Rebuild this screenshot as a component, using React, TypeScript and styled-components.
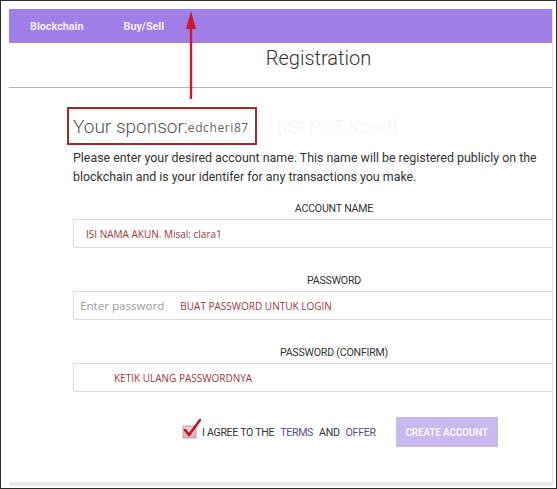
import React from "react";
import styled, { createGlobalStyle } from "styled-components";

const GlobalStyle = createGlobalStyle`
  body {
    margin: 0;
    background: #fff;
    font-family: Roboto, "Liberation Sans", sans-serif;
  }
`;

const Frame = styled.div`
  width: 557px;
  height: 489px;
  box-sizing: border-box;
  border: 1px solid #2b2b2b;
  padding: 8px 3px 0 8px;
  position: relative;
  overflow: hidden;
  display: flex;
  flex-direction: column;
  background: #fff;
`;

const Page = styled.div`
  flex: 1;
  display: flex;
  flex-direction: column;
  border-right: 1px solid #e2e2e2;
  border-bottom: 4px solid #e9e9e9;
  margin-bottom: 2px;
  overflow: hidden;
`;

const NavBar = styled.div`
  height: 34px;
  flex-shrink: 0;
  background: #a17fe9;
  display: flex;
  align-items: center;
  padding-left: 21px;
  gap: 40px;
`;

const NavLink = styled.span`
  color: #f6ecf8;
  font-family: Roboto, "Liberation Sans", sans-serif;
  font-weight: 700;
  font-size: 10.8px;
`;

const TitleBar = styled.div`
  height: 45px;
  flex-shrink: 0;
  box-sizing: border-box;
  border-bottom: 1px solid #b4b4b4;
  padding: 3px 0 0 76px;
  text-align: center;
  font-family: Roboto, sans-serif;
  font-weight: 300;
  font-size: 20px;
  line-height: 24px;
  color: #333;
`;

const Content = styled.div`
  padding-left: 64px;
  width: 522px;
`;

const SponsorRow = styled.div`
  margin-top: 19px;
  display: flex;
  align-items: center;
`;

const SponsorBox = styled.div`
  height: 38px;
  box-sizing: border-box;
  border: 2px solid #a6282d;
  margin-left: -6px;
  padding: 0 6px 0 4px;
  display: flex;
  align-items: center;
  white-space: nowrap;
`;

const SponsorLabel = styled.span`
  font-family: Roboto, sans-serif;
  font-weight: 300;
  font-size: 19px;
  color: #555;
`;

const SponsorName = styled.span`
  font-family: "Open Sans", sans-serif;
  font-size: 12px;
  letter-spacing: 0.6px;
  color: #666;
  padding-top: 3px;
`;

const Ghost = styled.span`
  margin-left: 20px;
  font-family: Roboto, sans-serif;
  font-weight: 300;
  font-size: 19px;
  color: #f6f6f6;
`;

const Description = styled.p`
  margin: 3px 0 0;
  font-family: Roboto, sans-serif;
  font-size: 12.4px;
  line-height: 19px;
  color: #333;
  padding-right: 46px;
`;

const Field = styled.div<{ $gap: number }>`
  margin-top: ${(p) => p.$gap}px;
  display: flex;
  flex-direction: column;
`;

const Label = styled.div`
  text-align: center;
  font-family: Roboto, sans-serif;
  font-size: 10.6px;
  letter-spacing: -0.2px;
  color: #333;
  line-height: 14px;
  margin-bottom: 3px;
`;

const InputBox = styled.div<{ $indent: number }>`
  height: 29px;
  box-sizing: border-box;
  border: 1px solid #dcdcdc;
  border-right: none;
  display: flex;
  align-items: center;
  padding-left: ${(p) => p.$indent}px;
  gap: 16px;
`;

const Placeholder = styled.span`
  font-family: "Open Sans", sans-serif;
  font-size: 11.6px;
  color: #9a9a9a;
`;

const Hint = styled.span`
  font-family: "Open Sans", sans-serif;
  font-size: 10px;
  color: #a3363a;
`;

const AgreeRow = styled.div`
  margin-top: 25px;
  padding-left: 109px;
  display: flex;
  align-items: center;
`;

const Check = styled.svg`
  width: 20px;
  height: 22px;
  margin-top: -6px;
`;

const AgreeText = styled.span<{ $link?: boolean }>`
  font-family: Roboto, sans-serif;
  font-size: 10.6px;
  letter-spacing: -0.3px;
  color: ${(p) => (p.$link ? "#5c4a8e" : "#333")};
  margin-right: 6px;
`;

const CreateButton = styled.div`
  margin-left: 14px;
  width: 102px;
  height: 30px;
  background: #c8b9ee;
  color: #f7f3ff;
  font-family: Roboto, sans-serif;
  font-weight: 700;
  font-size: 10px;
  letter-spacing: -0.2px;
  display: flex;
  align-items: center;
  justify-content: center;
`;

const Arrow = styled.svg`
  position: absolute;
  left: 181px;
  top: 8px;
  width: 20px;
  height: 92px;
`;

export default function App() {
  return (
    <>
      <GlobalStyle />
      <Frame>
        <Page>
          <NavBar>
            <NavLink>Blockchain</NavLink>
            <NavLink>Buy/Sell</NavLink>
          </NavBar>
          <TitleBar>Registration</TitleBar>
          <Content>
            <SponsorRow>
              <SponsorBox>
                <SponsorLabel>Your sponsor:</SponsorLabel>
                <SponsorName>edcheri87</SponsorName>
              </SponsorBox>
              <Ghost>(ISI PCT Kond)</Ghost>
            </SponsorRow>
            <Description>
              Please enter your desired account name. This name will be registered publicly on the
              blockchain and is your identifer for any transactions you make.
            </Description>
            <Field $gap={16}>
              <Label>ACCOUNT NAME</Label>
              <InputBox $indent={12}>
                <Hint>ISI NAMA AKUN. Misal: clara1</Hint>
              </InputBox>
            </Field>
            <Field $gap={26}>
              <Label>PASSWORD</Label>
              <InputBox $indent={6}>
                <Placeholder>Enter password</Placeholder>
                <Hint>BUAT PASSWORD UNTUK LOGIN</Hint>
              </InputBox>
            </Field>
            <Field $gap={26}>
              <Label>PASSWORD (CONFIRM)</Label>
              <InputBox $indent={40}>
                <Hint>KETIK ULANG PASSWORDNYA</Hint>
              </InputBox>
            </Field>
            <AgreeRow>
              <Check viewBox="0 0 20 22">
                <defs>
                  <linearGradient id="cb" x1="0" y1="0" x2="0" y2="1">
                    <stop offset="0" stopColor="#f3d6d8" />
                    <stop offset="1" stopColor="#d9b0b4" />
                  </linearGradient>
                </defs>
                <rect x="1" y="8" width="13" height="12" fill="url(#cb)" stroke="#b98a8e" strokeWidth="0.8" />
                <path d="M3 12 L7 17 L18 2" fill="none" stroke="#c0152a" strokeWidth="2.6" strokeLinecap="round" strokeLinejoin="round" />
              </Check>
              <AgreeText>I AGREE TO THE</AgreeText>
              <AgreeText $link>TERMS</AgreeText>
              <AgreeText>AND</AgreeText>
              <AgreeText $link>OFFER</AgreeText>
              <CreateButton>CREATE ACCOUNT</CreateButton>
            </AgreeRow>
          </Content>
        </Page>
        <Arrow viewBox="0 0 20 92">
          <line x1="9" y1="90" x2="9" y2="14" stroke="#cc1a2c" strokeWidth="2.4" />
          <polygon points="9,2 4,20 14,20" fill="#cc1a2c" />
        </Arrow>
      </Frame>
    </>
  );
}
